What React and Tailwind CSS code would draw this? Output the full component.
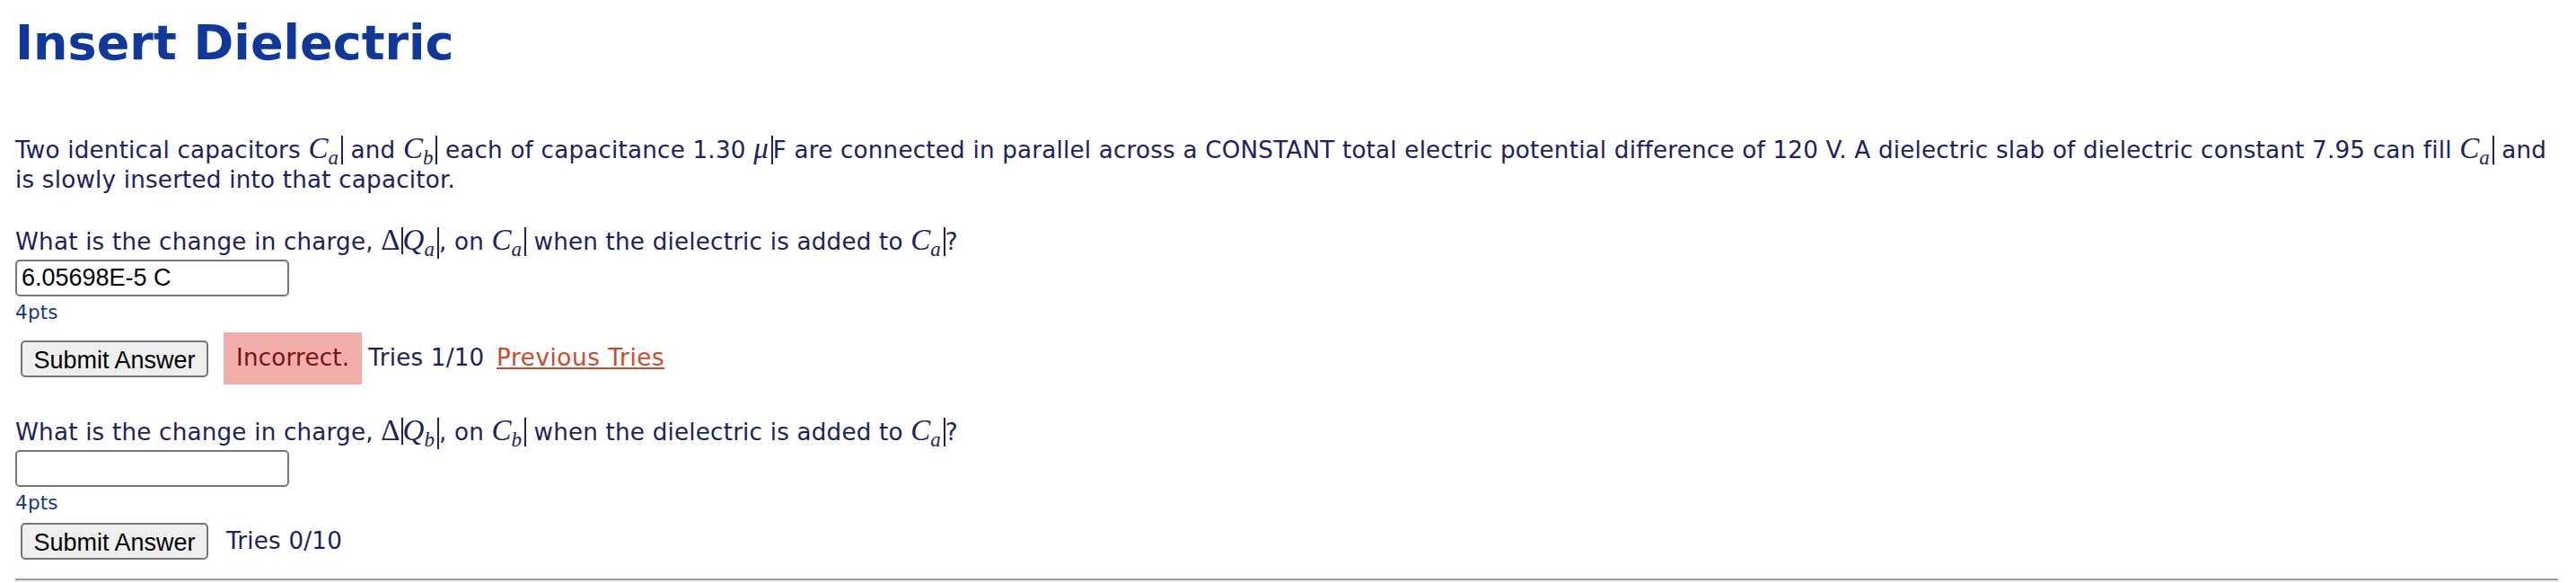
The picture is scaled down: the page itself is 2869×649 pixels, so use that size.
import React from 'react';

const bar = 'inline-block w-[2px] h-[32px] align-[-7px] bg-[#1c2261] ml-[3px]';
const barDeep = 'inline-block w-[2px] h-[35px] align-[-7px] -mb-[3px] bg-[#1c2261] ml-[3px]';

// italic math variable with optional subscript, followed by the little cursor bar
const Var = ({ children, sub, deep }) => (
  <span className="font-['Liberation_Serif',serif] italic leading-[0] tracking-normal">
    <span className="text-[33px]">{children}</span>
    {sub && <span className="relative top-[7px] text-[23px]">{sub}</span>}
    <span className={deep ? barDeep : bar} />
  </span>
);

const Delta = () => (
  <span className="font-['Liberation_Serif',serif] leading-[0] tracking-normal">
    <span className="text-[33px]">Δ</span>
    <span className="inline-block w-[2px] h-[30px] align-[-5px] bg-[#1c2261] ml-[1px]" />
  </span>
);

const Question = ({ children, value, tries, incorrect }) => (
  <div>
    <div className="leading-[33px]">{children}</div>
    <input
      type="text"
      defaultValue={value}
      className="mt-[3px] block w-[305px] h-[41px] border-2 border-[#767676] rounded-[5px] bg-white pl-[5px] font-['Liberation_Sans',sans-serif] text-[27px] tracking-normal text-black outline-none"
    />
    <div className="mt-[7px] leading-[22px] text-[21.5px] text-[#14368f]">4pts</div>
    <div className="mt-[11px] flex items-center">
      <button className="ml-[6px] w-[209px] h-[41px] border-2 border-[#767676] rounded-[5px] bg-[#efefef] font-['Liberation_Sans',sans-serif] text-[27px] tracking-normal text-black">
        Submit Answer
      </button>
      {incorrect ? (
        <>
          <span className="ml-[17px] h-[58px] px-[14px] flex items-center bg-[#f3aeab] text-[#7b1113]">Incorrect.</span>
          <span className="ml-[7px] whitespace-pre">
            {tries}{' '}
            <a href="#" className="ml-[5px] text-[#c94b2c] underline tracking-[0.6px]">Previous Tries</a>
          </span>
        </>
      ) : (
        <span className="ml-[20px]">{tries}</span>
      )}
    </div>
  </div>
);

export default function App() {
  return (
    <div className="min-h-screen bg-white pt-[15px] pl-[17px] pr-[20px] font-['DejaVu_Sans',Verdana,sans-serif] text-[26.2px] tracking-[0.2px] text-[#1c2261]">
      <h1 className="text-[54px] leading-[65px] font-bold tracking-normal text-[#10379a]">Insert Dielectric</h1>

      <p className="mt-[71px] leading-[33px]">
        Two identical capacitors <Var sub="a">C</Var> and <Var sub="b">C</Var> each of capacitance 1.30{' '}
        <Var>μ</Var>F are connected in parallel across a CONSTANT total electric potential difference of 120 V. A
        dielectric slab of dielectric constant 7.95 can fill <Var sub="a">C</Var> and is slowly inserted into that
        capacitor.
      </p>

      <div className="mt-[36px]">
        <Question value="6.05698E-5 C" tries="Tries 1/10" incorrect>
          What is the change in charge, <Delta />
          <Var sub="a" deep>Q</Var>, on <Var sub="a">C</Var> when the dielectric is added to <Var sub="a">C</Var>?
        </Question>
      </div>

      <div className="mt-[37px]">
        <Question value="" tries="Tries 0/10">
          What is the change in charge, <Delta />
          <Var sub="b" deep>Q</Var>, on <Var sub="b">C</Var> when the dielectric is added to <Var sub="a">C</Var>?
        </Question>
      </div>

      <div className="mt-[21px] border-t-2 border-b-2 border-t-[#9a9a9a] border-b-[#eeeeee]" />
    </div>
  );
}
